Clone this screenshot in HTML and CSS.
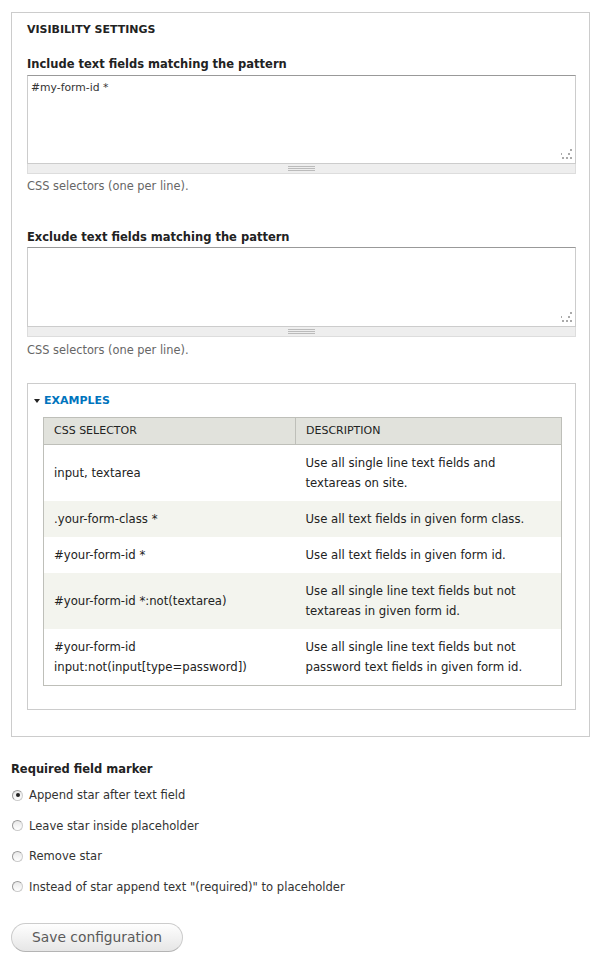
FILE: index.html
```html
<!DOCTYPE html>
<html>
<head>
<meta charset="utf-8">
<link rel="stylesheet" href="styles.css">
</head>
<body>
<div class="page">
  <fieldset class="fs-outer">
    <div class="legend">VISIBILITY SETTINGS</div>
    <div class="item">
      <label class="lbl">Include text fields matching the pattern</label>
      <div class="ta-wrap">
        <div class="ta">#my-form-id *<span class="resize"></span></div>
        <div class="grippie"><span></span></div>
      </div>
      <div class="desc">CSS selectors (one per line).</div>
    </div>
    <div class="item item2">
      <label class="lbl">Exclude text fields matching the pattern</label>
      <div class="ta-wrap">
        <div class="ta ta-short"><span class="resize"></span></div>
        <div class="grippie"><span></span></div>
      </div>
      <div class="desc desc2">CSS selectors (one per line).</div>
    </div>
    <fieldset class="fs-inner">
      <div class="ex-title"><span class="tri"></span>EXAMPLES</div>
      <table class="ex">
        <thead>
          <tr><th class="c1">CSS SELECTOR</th><th>DESCRIPTION</th></tr>
        </thead>
        <tbody>
          <tr class="odd"><td>input, textarea</td><td>Use all single line text fields and textareas on site.</td></tr>
          <tr class="even"><td>.your-form-class *</td><td>Use all text fields in given form class.</td></tr>
          <tr class="odd"><td>#your-form-id *</td><td>Use all text fields in given form id.</td></tr>
          <tr class="even"><td>#your-form-id *:not(textarea)</td><td>Use all single line text fields but not textareas in given form id.</td></tr>
          <tr class="odd"><td>#your-form-id input:not(input[type=password])</td><td>Use all single line text fields but not password text fields in given form id.</td></tr>
        </tbody>
      </table>
    </fieldset>
  </fieldset>

  <div class="marker">
    <div class="lbl">Required field marker</div>
    <div class="radios">
      <div class="radio"><span class="rb on"></span>Append star after text field</div>
      <div class="radio"><span class="rb"></span>Leave star inside placeholder</div>
      <div class="radio"><span class="rb"></span>Remove star</div>
      <div class="radio"><span class="rb"></span>Instead of star append text "(required)" to placeholder</div>
    </div>
  </div>

  <button class="btn">Save configuration</button>
</div>
</body>
</html>
```

FILE: styles.css
```css
html, body {
  margin: 0;
  padding: 0;
  background: #fff;
}
body {
  font-family: "DejaVu Sans", Verdana, sans-serif;
  font-size: 11px;
  color: #333;
}
.page {
  padding: 12px 12px 0 11px;
}
fieldset {
  margin: 0;
  min-width: 0;
}
.fs-outer {
  border: 1px solid #ccc;
  padding: 8px 13px 26px 15px;
}
.legend {
  font-weight: bold;
  font-size: 11px;
  color: #222;
  height: 18px;
  line-height: 18px;
}
.item {
  margin-top: 17px;
}
.item2 {
  margin-top: 36px;
}
.lbl {
  display: block;
  font-weight: bold;
  font-size: 11.5px;
  color: #222;
  line-height: 16px;
  height: 16px;
  margin-bottom: 3px;
}
.item2 .lbl {
  margin-bottom: 2px;
}
.ta {
  position: relative;
  height: 79px;
  border: 1px solid #ccc;
  border-top-color: #999;
  border-bottom: 1px solid #ccc;
  padding: 4px 3px;
  font-size: 10.8px;
  color: #333;
  line-height: 15px;
  background: #fff;
}
.ta-short {
  height: 70px;
}
.resize {
  position: absolute;
  right: 2px;
  bottom: 3px;
  width: 12px;
  height: 12px;
  background:
    radial-gradient(circle, #aaa 0.9px, transparent 1.2px) 8px 0 / 4px 4px no-repeat,
    radial-gradient(circle, #aaa 0.9px, transparent 1.2px) 4px 4px / 8px 4px repeat-x,
    radial-gradient(circle, #aaa 0.9px, transparent 1.2px) 0 8px / 4px 4px repeat-x;
}
.grippie {
  height: 9px;
  background: #eee;
  border: 1px solid #ddd;
  border-top: 0;
  display: flex;
  align-items: center;
  justify-content: center;
}
.grippie span {
  display: block;
  width: 27px;
  height: 5px;
  border-top: 1px solid #bbb;
  border-bottom: 1px solid #bbb;
  box-sizing: border-box;
  position: relative;
}
.grippie span::after {
  content: "";
  position: absolute;
  left: 0;
  right: 0;
  top: 1px;
  border-top: 1px solid #bbb;
}
.desc {
  font-size: 11.4px;
  color: #666;
  margin-top: 5px;
  line-height: 14px;
}
.desc2 {
  margin-top: 6px;
}
.fs-inner {
  margin-top: 26px;
  border: 1px solid #ccc;
  padding: 9px 13px 23px 15px;
}
.ex-title {
  font-weight: bold;
  font-size: 11px;
  color: #0074bd;
  line-height: 16px;
  height: 16px;
  margin-left: -9px;
  display: flex;
  align-items: center;
}
.tri {
  width: 0;
  height: 0;
  border-left: 3.5px solid transparent;
  border-right: 3.5px solid transparent;
  border-top: 4px solid #222;
  margin-right: 4px;
}
.ex {
  margin-top: 8px;
  width: 100%;
  border-collapse: collapse;
  border: 1px solid #bebfb9;
  font-size: 11.7px;
  color: #222;
}
.ex th {
  background: #e1e2dc;
  text-align: left;
  font-weight: normal;
  font-size: 11px;
  padding: 5px 10px;
  height: 16px;
  border-bottom: 1px solid #bebfb9;
  line-height: 16px;
}
.ex th.c1 {
  border-right: 1px solid #bebfb9;
  width: 231px;
}
.ex td {
  padding: 8px 10px;
  line-height: 20px;
  vertical-align: middle;
}
.ex tr.even td {
  background: #f3f4ee;
}
.marker {
  margin-top: 24px;
}
.marker .lbl {
  margin-bottom: 10px;
}
.radios {
  display: flex;
  flex-direction: column;
  gap: 14.5px;
}
.radio {
  display: flex;
  align-items: center;
  font-size: 11.55px;
  color: #333;
  line-height: 16px;
  height: 16px;
}
.rb {
  width: 9px;
  height: 9px;
  border-radius: 50%;
  border: 1px solid #999;
  border-right-color: #ccc;
  border-bottom-color: #ccc;
  background: linear-gradient(#e8e8e8, #fff);
  margin: 0 6px 0 1px;
  position: relative;
}
.rb.on::after {
  content: "";
  position: absolute;
  left: 2.5px;
  top: 2.5px;
  width: 4px;
  height: 4px;
  border-radius: 50%;
  background: #222;
}
.btn {
  margin-top: 28px;
  width: 172px;
  height: 29px;
  border: 1px solid #ccc;
  border-bottom-color: #b4b4b4;
  border-radius: 15px;
  background: linear-gradient(#fefefe, #e6e6e6);
  color: #5a5a5a;
  font-family: "DejaVu Sans", Verdana, sans-serif;
  font-size: 13.8px;
  padding: 0;
}
```
